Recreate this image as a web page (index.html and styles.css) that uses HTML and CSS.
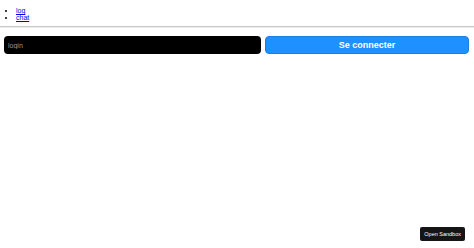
FILE: index.html
```html
<html>
    <head>
        <meta charset="UTF-8">
        <title>Login</title>
        <link rel="stylesheet" href="styles.css">
    </head>
    <body>
        <ul class="nav">
            <li><a href="#">log</a></li>
            <li><a href="#">chat</a></li>
        </ul>
        <hr>
        <form class="login">
            <input type="text" placeholder="login">
            <button type="button">Se connecter</button>
        </form>
        <a class="sandbox" href="#">Open Sandbox</a>
    </body>
</html>
```
FILE: styles.css
```css
html {
    background-color: white;
}

body {
    margin: 0;
    font-family: "Liberation Sans", Arial, sans-serif;
}

.nav {
    margin: 7px 0 0;
    padding-left: 16px;
    font-size: 7px;
    line-height: 7px;
}

.nav a {
    color: #0000ee;
}

hr {
    margin: 5px 0 0;
    border: 0;
    border-top: 1px solid #c8c8c8;
    border-bottom: 1px solid #ececec;
}

.login {
    display: flex;
    gap: 4px;
    margin: 8px 5px 0 4px;
}

.login input {
    flex: 0 0 257px;
    box-sizing: border-box;
    min-width: 0;
    height: 18px;
    padding: 0 4px;
    border: 0;
    border-radius: 4px;
    background-color: black;
    color: white;
    font-family: inherit;
    font-size: 7px;
}

.login input::placeholder {
    color: #9a9a9a;
}

.login button {
    flex: 1;
    box-sizing: border-box;
    height: 18px;
    border: 1px solid #1a7fe0;
    border-radius: 4px;
    background-color: #1e90ff;
    color: white;
    font-family: inherit;
    font-size: 9px;
    font-weight: bold;
}

.sandbox {
    position: fixed;
    right: 9px;
    bottom: 7px;
    padding: 4px 4px;
    border-radius: 2px;
    background-color: #151515;
    color: white;
    font-size: 5.5px;
    text-decoration: none;
}
```
